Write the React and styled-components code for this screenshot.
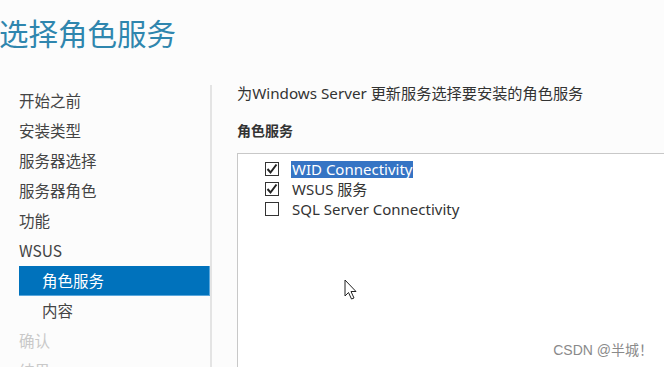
import React from 'react';
import styled, { createGlobalStyle } from 'styled-components';

const Global = createGlobalStyle`
  html, body {
    margin: 0;
    padding: 0;
    background: #fcfcfc;
    overflow: hidden;
  }
  body {
    font-family: "Noto Sans", "Noto Sans CJK SC", sans-serif;
  }
`;

const Page = styled.div`
  position: relative;
  width: 664px;
  height: 367px;
  overflow: hidden;
  background: #fcfcfc;
  color: #333;
`;

const Title = styled.h1`
  margin: 0;
  height: 85px;
  padding: 12px 0 0 0;
  box-sizing: border-box;
  font-family: "Noto Sans CJK SC", sans-serif;
  font-weight: 400;
  font-size: 29.5px;
  line-height: 40px;
  color: #2f86ae;
  text-indent: -1px;
`;

const Main = styled.div`
  display: flex;
  height: 282px;
`;

const Sidebar = styled.nav`
  width: 212px;
  flex: none;
  box-sizing: border-box;
  padding: 1px 0 0 19px;
  border-right: 2px solid #e4e4e4;
`;

const NavItem = styled.div`
  height: 30px;
  width: 191px;
  box-sizing: border-box;
  padding-left: ${({ sub }) => (sub ? '23px' : '0')};
  font-family: "Noto Sans CJK SC", sans-serif;
  font-size: 15.5px;
  line-height: 29px;
  color: ${({ active, disabled }) => (active ? '#fff' : disabled ? '#c9c9c9' : '#444')};
  background: ${({ active }) => (active ? '#0072bc' : 'transparent')};
  border: ${({ active }) => (active ? '1px solid #5aa7dc' : 'none')};
  border-width: ${({ active }) => (active ? '0 1px 1px 0' : '0')};
  white-space: nowrap;
`;

const Content = styled.section`
  flex: 1;
  padding-left: 25px;
`;

const Intro = styled.p`
  margin: 0;
  font-size: 15.2px;
  line-height: 17px;
  color: #333;
  white-space: nowrap;
`;

const Heading = styled.h2`
  margin: 18px 0 0;
  font-family: "Noto Sans CJK SC", sans-serif;
  font-size: 14px;
  font-weight: 700;
  line-height: 20px;
  color: #333;
`;

const ListBox = styled.div`
  margin-top: 13px;
  height: 300px;
  border: 1px solid #c8c8c8;
  border-right: none;
  padding: 5px 0 0 27px;
  background: #fff;
`;

const Row = styled.label`
  display: flex;
  align-items: center;
  height: 20px;
  gap: 12px;
`;

const Box = styled.span`
  width: 14px;
  height: 14px;
  flex: none;
  border: 1px solid #333;
  box-sizing: border-box;
  background: #fff;
  display: flex;
  align-items: center;
  justify-content: center;
`;

const Label = styled.span`
  font-size: 15px;
  line-height: 17px;
  padding: 0 1px;
  color: ${({ selected }) => (selected ? '#fff' : '#333')};
  background: ${({ selected }) => (selected ? '#3574c4' : 'transparent')};
  white-space: nowrap;
`;

const Cursor = styled.svg`
  position: absolute;
  left: 344px;
  top: 279px;
`;

const Watermark = styled.div`
  position: absolute;
  right: 11px;
  bottom: 8px;
  font-family: "Liberation Sans", "Noto Sans CJK SC", sans-serif;
  font-size: 14px;
  color: #8a8a8a;
`;

const Check = () => (
  <svg width="12" height="12" viewBox="0 0 12 12">
    <path d="M1.5 6 L4.5 9.5 L10.5 1.5" fill="none" stroke="#222" strokeWidth="2" />
  </svg>
);

const nav = [
  { text: '开始之前' },
  { text: '安装类型' },
  { text: '服务器选择' },
  { text: '服务器角色' },
  { text: '功能' },
  { text: 'WSUS' },
  { text: '角色服务', sub: true, active: true },
  { text: '内容', sub: true },
  { text: '确认', disabled: true },
  { text: '结果', disabled: true },
];

const services = [
  { name: 'WID Connectivity', checked: true, selected: true },
  { name: 'WSUS 服务', checked: true },
  { name: 'SQL Server Connectivity', checked: false },
];

export default function App() {
  return (
    <Page>
      <Global />
      <Title>选择角色服务</Title>
      <Main>
        <Sidebar>
          {nav.map((n) => (
            <NavItem key={n.text} sub={n.sub} active={n.active} disabled={n.disabled}>
              {n.text}
            </NavItem>
          ))}
        </Sidebar>
        <Content>
          <Intro>为Windows Server 更新服务选择要安装的角色服务</Intro>
          <Heading>角色服务</Heading>
          <ListBox>
            {services.map((s) => (
              <Row key={s.name}>
                <Box>{s.checked && <Check />}</Box>
                <Label selected={s.selected}>{s.name}</Label>
              </Row>
            ))}
          </ListBox>
        </Content>
      </Main>
      <Cursor width="14" height="22" viewBox="0 0 14 22">
        <path
          d="M1 1 L1 17 L4.5 13.5 L7.5 20 L10 19 L7 12.5 L12 12.5 Z"
          fill="#fff"
          stroke="#222"
          strokeWidth="1"
          strokeLinejoin="round"
        />
      </Cursor>
      <Watermark>CSDN @半城！</Watermark>
    </Page>
  );
}
